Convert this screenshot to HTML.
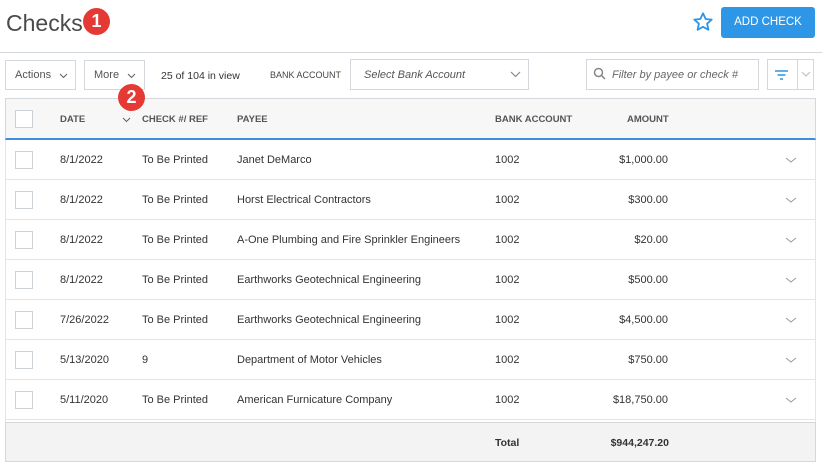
<!DOCTYPE html>
<html><head><style>
*{box-sizing:border-box;margin:0;padding:0}
body{width:822px;height:462px;background:#fff;font-family:"Liberation Sans",sans-serif;color:#333;position:relative;overflow:hidden;font-size:11px}
.a{position:absolute}
.box{position:absolute;border:1px solid #d4d8dd;background:#fff}
.badge{position:absolute;width:27px;height:27px;border-radius:50%;background:#e53935;color:#fff;font-size:18px;font-weight:bold;text-align:center;line-height:27px}
.th{position:absolute;top:114px;font-size:9.5px;font-weight:bold;color:#555}
.row{position:absolute;left:5px;width:811px;height:40px;border-bottom:1px solid #e2e5e8}
.row span{position:absolute;top:14px;font-size:11px;color:#333}
.cb{position:absolute;left:10px;top:11px;width:18px;height:18px;border:1px solid #ccd1d6;background:#fff}
.chev{position:absolute;left:780px;top:11px}
</style></head><body>
<div class="a" style="left:6px;top:10px;font-size:23px;color:#4a4a4a">Checks</div>
<div class="badge" style="left:83px;top:8px">1</div>
<svg class="a" style="left:692px;top:11px" width="22" height="22" viewBox="0 0 24 24"><path d="M12 2.5l2.9 6.2 6.6.7-5 4.5 1.4 6.6L12 17.2l-5.9 3.3 1.4-6.6-5-4.5 6.6-.7z" fill="none" stroke="#2d96e6" stroke-width="2" stroke-linejoin="round"/></svg>
<div class="a" style="left:721px;top:7px;width:94px;height:31px;background:#2d96e6;border-radius:3px;color:#fff;font-size:11.5px;text-align:center;line-height:31px">ADD CHECK</div>
<div class="a" style="left:0;top:52px;width:822px;height:1px;background:#d4d8dd"></div>
<div class="box" style="left:5px;top:60px;width:71px;height:30px;font-size:11px;color:#555;padding:8px 0 0 9px">Actions</div>
<svg class="a" style="left:59px;top:73px" width="9" height="6"><path d="M1 1l3.5 3.5L8 1" fill="none" stroke="#666" stroke-width="1.1"/></svg>
<div class="box" style="left:84px;top:60px;width:61px;height:30px;font-size:11px;color:#555;padding:8px 0 0 9px">More</div>
<svg class="a" style="left:127px;top:73px" width="9" height="6"><path d="M1 1l3.5 3.5L8 1" fill="none" stroke="#666" stroke-width="1.1"/></svg>
<div class="a" style="left:161px;top:70px;font-size:10.5px">25 of 104 in view</div>
<div class="a" style="left:270px;top:70px;font-size:9px;color:#444">BANK ACCOUNT</div>
<div class="box" style="left:350px;top:59px;width:179px;height:31px;padding:9px 0 0 13px;font-style:italic;color:#555">Select Bank Account</div>
<svg class="a" style="left:510px;top:71px" width="11" height="7"><path d="M1 1l4.5 4.5L10 1" fill="none" stroke="#888" stroke-width="1.2"/></svg>
<div class="box" style="left:586px;top:59px;width:173px;height:31px;padding:9px 0 0 25px;font-style:italic;color:#666">Filter by payee or check #</div>
<svg class="a" style="left:593px;top:67px" width="13" height="13"><circle cx="5.5" cy="5.5" r="4" fill="none" stroke="#888" stroke-width="1.5"/><path d="M8.5 8.5l3.5 3.5" stroke="#888" stroke-width="1.5"/></svg>
<div class="box" style="left:767px;top:59px;width:47px;height:31px"></div>
<div class="a" style="left:797px;top:60px;width:1px;height:29px;background:#d4d8dd"></div>
<svg class="a" style="left:775px;top:70px" width="13" height="10"><path d="M0 1h13M2.5 5h8M5 9h3" stroke="#2d96e6" stroke-width="1.6"/></svg>
<svg class="a" style="left:801px;top:71px" width="10" height="6"><path d="M1 1l4 4 4-4" fill="none" stroke="#bbb" stroke-width="1"/></svg>
<div class="a" style="left:5px;top:98px;width:811px;height:42px;background:#f7f7f7;border:1px solid #d4d8dd;border-bottom:2px solid #3d8fdb"></div>
<div class="cb" style="left:15px;top:110px"></div>
<div class="th" style="left:60px">DATE</div>
<svg class="a" style="left:122px;top:117px" width="9" height="6"><path d="M1 1l3.5 3.5L8 1" fill="none" stroke="#666" stroke-width="1.1"/></svg>
<div class="th" style="left:142px">CHECK #/ REF</div>
<div class="th" style="left:237px">PAYEE</div>
<div class="th" style="left:495px">BANK ACCOUNT</div>
<div class="th" style="left:627px">AMOUNT</div>
<div class="badge" style="left:118px;top:84px">2</div>
<div class="a" style="left:5px;top:140px;width:811px;height:282px;border-left:1px solid #e2e5e8;border-right:1px solid #e2e5e8"></div>

<div class="row" style="top:140px"><div class="cb"></div><span style="left:55px">8/1/2022</span><span style="left:137px">To Be Printed</span><span style="left:232px">Janet DeMarco</span><span style="left:490px">1002</span><span style="right:148px">$1,000.00</span><svg class="chev" width="12" height="18"><path d="M1 7l5 4 5-4" fill="none" stroke="#999" stroke-width="1"/></svg></div>
<div class="row" style="top:180px"><div class="cb"></div><span style="left:55px">8/1/2022</span><span style="left:137px">To Be Printed</span><span style="left:232px">Horst Electrical Contractors</span><span style="left:490px">1002</span><span style="right:148px">$300.00</span><svg class="chev" width="12" height="18"><path d="M1 7l5 4 5-4" fill="none" stroke="#999" stroke-width="1"/></svg></div>
<div class="row" style="top:220px"><div class="cb"></div><span style="left:55px">8/1/2022</span><span style="left:137px">To Be Printed</span><span style="left:232px">A-One Plumbing and Fire Sprinkler Engineers</span><span style="left:490px">1002</span><span style="right:148px">$20.00</span><svg class="chev" width="12" height="18"><path d="M1 7l5 4 5-4" fill="none" stroke="#999" stroke-width="1"/></svg></div>
<div class="row" style="top:260px"><div class="cb"></div><span style="left:55px">8/1/2022</span><span style="left:137px">To Be Printed</span><span style="left:232px">Earthworks Geotechnical Engineering</span><span style="left:490px">1002</span><span style="right:148px">$500.00</span><svg class="chev" width="12" height="18"><path d="M1 7l5 4 5-4" fill="none" stroke="#999" stroke-width="1"/></svg></div>
<div class="row" style="top:300px"><div class="cb"></div><span style="left:55px">7/26/2022</span><span style="left:137px">To Be Printed</span><span style="left:232px">Earthworks Geotechnical Engineering</span><span style="left:490px">1002</span><span style="right:148px">$4,500.00</span><svg class="chev" width="12" height="18"><path d="M1 7l5 4 5-4" fill="none" stroke="#999" stroke-width="1"/></svg></div>
<div class="row" style="top:340px"><div class="cb"></div><span style="left:55px">5/13/2020</span><span style="left:137px">9</span><span style="left:232px">Department of Motor Vehicles</span><span style="left:490px">1002</span><span style="right:148px">$750.00</span><svg class="chev" width="12" height="18"><path d="M1 7l5 4 5-4" fill="none" stroke="#999" stroke-width="1"/></svg></div>
<div class="row" style="top:380px"><div class="cb"></div><span style="left:55px">5/11/2020</span><span style="left:137px">To Be Printed</span><span style="left:232px">American Furnicature Company</span><span style="left:490px">1002</span><span style="right:148px">$18,750.00</span><svg class="chev" width="12" height="18"><path d="M1 7l5 4 5-4" fill="none" stroke="#999" stroke-width="1"/></svg></div>

<div class="a" style="left:5px;top:422px;width:811px;height:40px;background:#f3f3f3;border:1px solid #d4d8dd"></div>
<div class="a" style="left:495px;top:437px;font-weight:bold;font-size:10.5px">Total</div>
<div class="a" style="left:560px;width:109px;text-align:right;top:437px;font-weight:bold;font-size:10.5px">$944,247.20</div>
</body></html>
